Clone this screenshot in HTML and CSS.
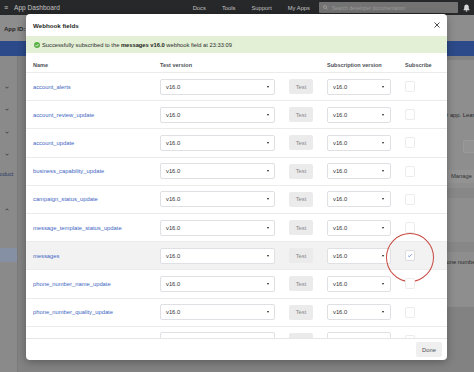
FILE: index.html
```html
<!DOCTYPE html>
<html>
<head>
<meta charset="utf-8">
<link rel="stylesheet" href="styles.css">
</head>
<body>
<div class="page">
  <header class="topnav">
    <span class="burger">≡</span>
    <span class="brand">App Dashboard</span>
    <nav class="links">
      <a>Docs</a><a>Tools</a><a>Support</a><a>My Apps</a>
    </nav>
    <div class="search">
      <svg class="mag" width="5" height="5" viewBox="0 0 10 10"><circle cx="4" cy="4" r="3" fill="none" stroke="#a5a5a5" stroke-width="1.4"/><path d="M6.3 6.3L9 9" stroke="#a5a5a5" stroke-width="1.4"/></svg>
      <span>Search developer documentation</span>
    </div>
    <svg class="bell" width="7" height="8" viewBox="0 0 14 16"><path d="M7 1c-2.8 0-4.5 2-4.5 4.6v3.6L1 11.5v1h12v-1l-1.5-2.3V5.6C11.5 3 9.8 1 7 1z" fill="#d8d8d8"/><circle cx="7" cy="14" r="1.6" fill="#d8d8d8"/></svg>
  </header>
  <div class="appbar"><b>App ID:</b></div>
  <div class="blueband"></div>
  <div class="main">
    <aside class="sidebar">
      <div class="side-item"><svg width="4" height="3" viewBox="0 0 8 5"><path d="M1 1l3 3 3-3" stroke="#2e2e2e" stroke-width="1.5" fill="none"/></svg></div>
      <div class="side-item"><svg width="4" height="3" viewBox="0 0 8 5"><path d="M1 1l3 3 3-3" stroke="#2e2e2e" stroke-width="1.5" fill="none"/></svg></div>
      <div class="side-item"><svg width="4" height="3" viewBox="0 0 8 5"><path d="M1 1l3 3 3-3" stroke="#2e2e2e" stroke-width="1.5" fill="none"/></svg></div>
      <div class="side-item"><svg width="4" height="3" viewBox="0 0 8 5"><path d="M1 1l3 3 3-3" stroke="#2e2e2e" stroke-width="1.5" fill="none"/></svg></div>
      <div class="side-product">Product</div>
      <div class="side-up"><svg width="4" height="3" viewBox="0 0 8 5"><path d="M1 4l3-3 3 3" stroke="#2e2e2e" stroke-width="1.5" fill="none"/></svg></div>
      <div class="side-active"></div>
    </aside>
    <section class="content">
      <div class="card">
        <p class="intro">your app. Learn more</p>
        <div class="minibox"></div>
        <div class="manage">Manage</div>
        <div class="band"></div>
        <div class="band band2"></div>
        <p class="phone">phone number</p>
      </div>
    </section>
  </div>
</div>

<div class="modal">
  <div class="modal-head">
    <h2>Webhook fields</h2>
    <svg class="close" width="6" height="6" viewBox="0 0 6 6"><path d="M0.5 0.5L5.5 5.5M5.5 0.5L0.5 5.5" stroke="#3a3a3a" stroke-width="0.9"/></svg>
  </div>
  <div class="banner">
    <svg class="ok" width="6" height="6" viewBox="0 0 10 10"><circle cx="5" cy="5" r="5" fill="#5bb047"/><path d="M2.7 5.2l1.7 1.7 3-3.3" stroke="#fff" stroke-width="1.4" fill="none"/></svg>
    <span>Successfully subscribed to the <b>messages v16.0</b> webhook field at 23:33:09</span>
  </div>
  <div class="row thead">
    <div>Name</div><div>Test version</div><div></div><div>Subscription version</div><div>Subscribe</div>
  </div>
  <div class="tbody">
    <div class="row trow"><a class="name">account_alerts</a><div class="select wide"><span>v16.0</span><i class="arrow"></i></div><div class="btn-test">Test</div><div class="select narrow"><span>v16.0</span><i class="arrow"></i></div><div class="check"></div></div>
    <div class="row trow"><a class="name">account_review_update</a><div class="select wide"><span>v16.0</span><i class="arrow"></i></div><div class="btn-test">Test</div><div class="select narrow"><span>v16.0</span><i class="arrow"></i></div><div class="check"></div></div>
    <div class="row trow"><a class="name">account_update</a><div class="select wide"><span>v16.0</span><i class="arrow"></i></div><div class="btn-test">Test</div><div class="select narrow"><span>v16.0</span><i class="arrow"></i></div><div class="check"></div></div>
    <div class="row trow"><a class="name">business_capability_update</a><div class="select wide"><span>v16.0</span><i class="arrow"></i></div><div class="btn-test">Test</div><div class="select narrow"><span>v16.0</span><i class="arrow"></i></div><div class="check"></div></div>
    <div class="row trow"><a class="name">campaign_status_update</a><div class="select wide"><span>v16.0</span><i class="arrow"></i></div><div class="btn-test">Test</div><div class="select narrow"><span>v16.0</span><i class="arrow"></i></div><div class="check"></div></div>
    <div class="row trow"><a class="name">message_template_status_update</a><div class="select wide"><span>v16.0</span><i class="arrow"></i></div><div class="btn-test">Test</div><div class="select narrow"><span>v16.0</span><i class="arrow"></i></div><div class="check"></div></div>
    <div class="row trow sel"><a class="name">messages</a><div class="select wide"><span>v16.0</span><i class="arrow"></i></div><div class="btn-test">Test</div><div class="select narrow"><span>v16.0</span><i class="arrow"></i></div><div class="check checked"><svg width="6" height="5" viewBox="0 0 12 10"><path d="M2 5.2L4.6 7.6L10 2.2" stroke="#4f74d6" stroke-width="1.4" fill="none"/></svg><span class="ring"></span></div></div>
    <div class="row trow"><a class="name">phone_number_name_update</a><div class="select wide"><span>v16.0</span><i class="arrow"></i></div><div class="btn-test">Test</div><div class="select narrow"><span>v16.0</span><i class="arrow"></i></div><div class="check"></div></div>
    <div class="row trow"><a class="name">phone_number_quality_update</a><div class="select wide"><span>v16.0</span><i class="arrow"></i></div><div class="btn-test">Test</div><div class="select narrow"><span>v16.0</span><i class="arrow"></i></div><div class="check"></div></div>
    <div class="row trow"><a class="name">security</a><div class="select wide"><span>v16.0</span><i class="arrow"></i></div><div class="btn-test">Test</div><div class="select narrow"><span>v16.0</span><i class="arrow"></i></div><div class="check"></div></div>
  </div>
  <div class="modal-foot"><button class="done">Done</button></div>
</div>
</body>
</html>
```

FILE: styles.css
```css
* { box-sizing: border-box; margin: 0; padding: 0; }
html, body { width: 474px; height: 372px; overflow: hidden; }
body {
  font-family: "Liberation Sans", Arial, sans-serif;
  font-size: 5.8px;
  color: #1c1e21;
  background: #828282;
  position: relative;
}
.page { width: 474px; height: 372px; display: flex; flex-direction: column; }

/* top nav */
.topnav {
  flex: none; height: 15px; background: #27282a; color: #c4c4c4;
  display: flex; align-items: center; padding: 0 4px;
}
.burger { font-size: 7px; width: 10px; line-height: 1; }
.brand { font-size: 6.6px; }
.links { margin-left: auto; display: flex; gap: 16px; font-size: 5.8px; }
.search {
  margin-left: 9px; width: 139px; height: 11px; background: #737373;
  border-radius: 1px; display: flex; align-items: center; gap: 4px; padding-left: 4px;
  color: #9c9c9c; font-size: 5px;
}
.bell { margin-left: 5px; }

.appbar {
  flex: none; height: 26px; background: #8d8d8d; display: flex; align-items: center;
  padding: 2px 0 0 4px; color: #262626; font-size: 6px;
}
.blueband { flex: none; height: 15px; background: #2c4a89; }

.main { flex: 1; display: flex; }
.sidebar {
  width: 22px; background: #8a8a8a; border-right: 1px solid #7a7a7a;
  display: flex; flex-direction: column; padding-top: 20px;
}
.side-item { height: 22.5px; display: flex; align-items: center; padding-left: 5px; }
.side-product { height: 16px; display: flex; align-items: center; margin-left: -6px; color: #2b3b66; font-size: 5.6px; white-space: nowrap; }
.side-up { margin-top: 18px; height: 18px; display: flex; align-items: center; padding-left: 5px; }
.side-active { margin-top: 30px; height: 14px; width: 17px; background: #8690a4; }

.content { flex: 1; padding-top: 4px; }
.card {
  margin-left: 418px; height: 247px; background: #8e8e8e; position: relative;
  display: flex; flex-direction: column; white-space: nowrap; color: #2a2a2a;
}
.intro { margin-top: 51px; height: 8px; line-height: 8px; padding-left: 1px; }
.minibox { margin: 21px 0 0 27px; width: 20px; height: 13px; border: 1px solid #9a9a9a; background: #939393; border-radius: 1px; }
.manage { margin: 17px 0 0 11px; width: 30px; height: 13px; line-height: 13px; background: #939393; border-radius: 2px; padding-left: 4px; color: #333; }
.band { margin-top: 5px; height: 10px; background: #878787; }
.band2 { margin-top: 44px; }
.phone { margin-top: 6px; padding-left: 4px; line-height: 8px; }

/* modal */
.modal {
  position: absolute; left: 26px; top: 14px; width: 421px; height: 346px;
  background: #fff; border-radius: 4px; box-shadow: 0 2px 8px rgba(0,0,0,.3);
  display: flex; flex-direction: column; overflow: hidden;
}
.modal-head {
  flex: none; height: 22px; padding: 0 7px; display: flex; align-items: center; justify-content: space-between;
}
.modal-head h2 { font-size: 6.2px; font-weight: bold; color: #1c1e21; }
.banner {
  flex: none; height: 17px; background: #e3f0d6; display: flex; align-items: center;
  padding-left: 8px; gap: 2px; color: #2b2b2b; font-size: 5.75px;
}
.banner b { color: #1c1e21; }

.row {
  display: grid; grid-template-columns: 113px 115px 24px 64px 1fr; column-gap: 14px;
  padding-left: 7px; align-items: center; border-bottom: 1px solid #ebebeb;
}
.thead { flex: none; height: 20px; padding-top: 4px; font-weight: bold; font-size: 5.5px; color: #4b4f56; }
.tbody { flex: none; height: 265px; overflow: hidden; }
.trow { height: 28.2px; }
.trow.sel { background: #f2f2f2; }
.name { color: #4165c2; white-space: nowrap; }
.select {
  height: 16px; border: 1px solid #dfe0e3; border-radius: 2px; background: #fff;
  display: flex; align-items: center; justify-content: space-between; padding: 0 5px; color: #333;
}
.select.narrow { padding-right: 6px; }
.arrow {
  width: 0; height: 0; border-left: 1.8px solid transparent; border-right: 1.8px solid transparent;
  border-top: 2.4px solid #1f1f1f;
}
.btn-test {
  height: 15px; background: #ebebeb; border-radius: 2px; color: #888;
  display: flex; align-items: center; justify-content: center;
}
.check {
  position: relative; width: 10px; height: 11px; border: 1px solid #ececec; border-radius: 2px; background: #fff;
  display: flex; align-items: center; justify-content: center;
}
.check.checked { border-color: #dcdcdc; }
.ring {
  position: absolute; left: -20px; top: -18px; width: 48px; height: 49px;
  border: 1px solid #c8473f; border-radius: 50%;
}

.modal-foot {
  flex: none; height: 22px; border-top: 1px solid #e6e6e6; display: flex; align-items: center;
  justify-content: flex-end; padding-right: 5px;
}
.done {
  width: 26px; height: 15px; background: #efefef; border: none; border-radius: 2px;
  font-family: inherit; font-size: 5.8px; color: #4b4f56;
}
```
